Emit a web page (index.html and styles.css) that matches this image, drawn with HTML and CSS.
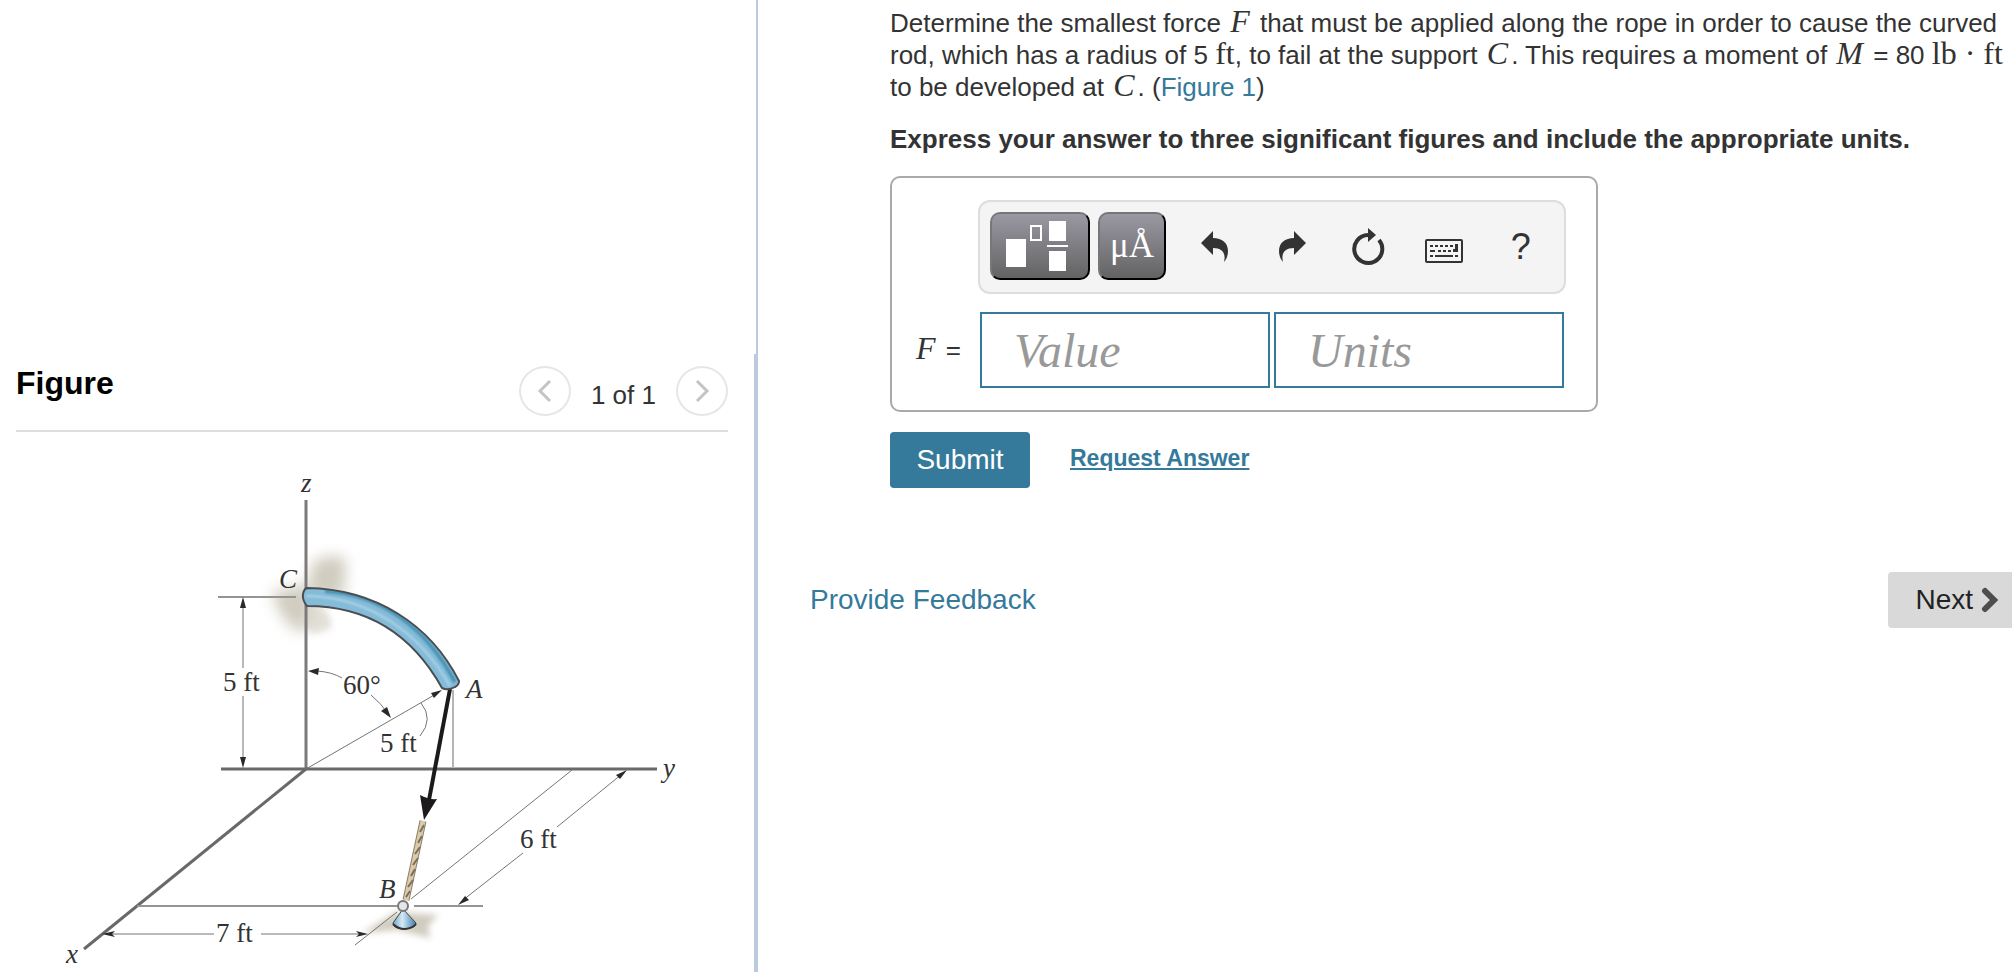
FILE: index.html
```html
<!DOCTYPE html>
<html lang="en">
<head>
<meta charset="UTF-8" />
<meta name="viewport" content="width=device-width, initial-scale=1.0">
<title>Smallest force along the rope</title>
<link rel="stylesheet" href="styles.css">
</head>
<body>

<div class="page">

  <aside class="left">
    <div class="spacer"></div>
    <section class="figure">
      <header class="figure-head">
        <h2>Figure</h2>
        <div class="pager">
          <button class="round" type="button" aria-label="Previous figure">
            <svg width="16" height="24" viewBox="0 0 16 24"><path d="M13 2 L3 12 L13 22"/></svg>
          </button>
          <span>1 of 1</span>
          <button class="round" type="button" aria-label="Next figure">
            <svg width="16" height="24" viewBox="0 0 16 24"><path d="M3 2 L13 12 L3 22"/></svg>
          </button>
        </div>
      </header>

      <svg class="diagram" viewBox="16 448 712 524" role="img" aria-label="Curved rod CA with rope AB">
        <defs>
          <filter id="soft" x="-60%" y="-60%" width="220%" height="220%"><feGaussianBlur stdDeviation="7"/></filter>
          <filter id="soft2" x="-50%" y="-50%" width="200%" height="200%"><feGaussianBlur stdDeviation="3"/></filter>
          <filter id="soft1" x="-20%" y="-20%" width="140%" height="140%"><feGaussianBlur stdDeviation="1"/></filter>
          <linearGradient id="cone" x1="0" x2="1" y1="0" y2="0">
            <stop offset="0" stop-color="#6fa6cb"/><stop offset=".4" stop-color="#d5ebf6"/><stop offset="1" stop-color="#3f7fae"/>
          </linearGradient>
          <clipPath id="rodclip"><path d="M307 588 C375 589 430 624 459 681 Q459 685 455 687 Q448 691 442 688 C413 636 370 606 307 606 Q302 600 303 594 Q304 589 307 588Z"/></clipPath>
        </defs>

        <!-- wall and ground shading -->
        <g class="shade">
          <path d="M306 598 L312 564 Q330 550 346 560 L344 596 Z" filter="url(#soft)"/>
          <path d="M310 584 L272 592 Q280 624 304 634 L312 606 Z" filter="url(#soft)"/>
          <path d="M306 606 L322 606 Q334 620 330 629 L314 634 L302 624 Z" filter="url(#soft2)" opacity=".6"/>
          <path d="M396 912 L362 933 L398 930 L430 938 L428 926 L438 915 Z" filter="url(#soft2)"/>
        </g>

        <!-- axes -->
        <g class="axis">
          <path d="M306 500 V769"/>
          <path d="M221 769 H657" class="dark"/>
          <path d="M306 769 L84 949" class="dark"/>
        </g>

        <!-- thin lines -->
        <g class="thin">
          <path d="M218 597 H296" class="mid"/>
          <path d="M137 906 H397 M414 906 H483" class="mid"/>
          <path d="M243 600 V668 M243 696 V764"/>
          <path d="M306 769 L436 694"/>
          <path d="M453 690 V768" class="pale"/>
          <path d="M317 671 Q332 672 342 678 M371 695 Q382 704 388 714"/>
          <path d="M421 703 Q434 719 420 736"/>
          <path d="M411 899 L572 770 M397 912 L355 945"/>
          <path d="M463 900 L523 853 M557 827 L622 774"/>
          <path d="M108 934 H214 M261 934 H362"/>
        </g>

        <!-- arrow heads -->
        <g class="head">
          <path d="M243 597 l-3 11 h6z"/>
          <path d="M243 768 l-3 -11 h6z"/>
          <path d="M308 671 l11 -3 l-1 7z"/>
          <path d="M391 718 l-10 -7 l6 -4z"/>
          <path d="M442 690 l-11 3 l3 5z"/>
          <path d="M458 905 l11 -5 l-4 -4z"/>
          <path d="M627 770 l-11 5 l4 4z"/>
          <path d="M102 934 l13 -3 l-3 3 l3 3z"/>
          <path d="M368 934 l-12 -3 l3 3 l-3 3z"/>
        </g>

        <!-- rope -->
        <path d="M423 821 L406 900" stroke="#8b7f6b" stroke-width="7"/>
        <path d="M423 821 L406 900" stroke="#dccbaa" stroke-width="5"/>
        <path d="M420 832 l4 -7 M418 843 l4 -7 M415 854 l5 -7 M413 865 l5 -7 M411 876 l4 -7 M408 887 l5 -7 M406 897 l4 -6" stroke="#7d705b" stroke-width="2"/>

        <!-- force -->
        <path d="M450 689 L429 800" stroke="#1c1a1b" stroke-width="4"/>
        <path d="M424 820 L420 795 Q429 800 437 799 Z" fill="#1c1a1b"/>

        <!-- rod -->
        <g clip-path="url(#rodclip)">
          <rect x="295" y="580" width="170" height="115" fill="#84bbd8"/>
          <path d="M325 591 C382 594 427 629 455 682" fill="none" stroke="#4a93b3" stroke-width="4" filter="url(#soft1)"/>
          <path d="M306 596 C370 597 420 633 450 686" fill="none" stroke="#b0d6e8" stroke-width="2" filter="url(#soft1)"/>
        </g>
        <path class="rod-edge" d="M307 588 C375 589 430 624 459 681 Q459 685 455 687 Q448 691 442 688 C413 636 370 606 307 606 Q302 600 303 594 Q304 589 307 588Z"/>

        <!-- support at B -->
        <path d="M403 909 L393 923 Q393 929 405 929 Q416 928 416 923 Z" fill="url(#cone)" stroke="#444" stroke-width="1"/>
        <path d="M393 924 Q398 929 405 929 Q413 928 416 924" fill="none" stroke="#333" stroke-width="2"/>
        <circle cx="403" cy="906" r="5" fill="#e6e6ea" stroke="#77777c" stroke-width="2"/>

        <g class="labels">
          <text x="301" y="492" class="it">z</text>
          <text x="279" y="588" class="it">C</text>
          <text x="466" y="698" class="it">A</text>
          <text x="379" y="898" class="it">B</text>
          <text x="663" y="777" class="it">y</text>
          <text x="66" y="963" class="it">x</text>
          <text x="223" y="691">5 ft</text>
          <text x="343" y="694">60°</text>
          <text x="380" y="752">5 ft</text>
          <text x="520" y="848">6 ft</text>
          <text x="216" y="942">7 ft</text>
        </g>
      </svg>
    </section>
  </aside>

  <main class="right">
    <div class="problem">
      <p class="question">Determine the smallest force <i class="math">F</i> that must be applied along the rope in order to cause the curved<br>
      rod, which has a radius of 5 <span class="math">ft</span>, to fail at the support <i class="math">C</i>. This requires a moment of <i class="math">M</i> = 80 <span class="math">lb · ft</span><br>
      to be developed at <i class="math">C</i>. (<a href="#">Figure 1</a>)</p>
      <p class="instruction">Express your answer to three significant figures and include the appropriate units.</p>

      <form class="answer">
        <div class="toolbar">
          <button class="tool wide" type="button" aria-label="Templates">
            <svg width="68" height="50" viewBox="0 0 68 50">
              <path d="M0 18h20v28H0z M43 0h17v20H43z M43 30h17v20H43z M41 24h21v2H41z" fill="#fff"/>
              <rect x="25" y="5" width="10" height="14" fill="none" stroke="#fff" stroke-width="2"/>
            </svg>
          </button>
          <button class="tool" type="button" aria-label="Symbols">μÅ</button>
          <div class="icons">
            <button type="button" aria-label="Undo">
              <svg width="28" height="32" viewBox="0 0 28 32"><path d="M0 12 L12 0 V7 C21 7 27 12 27 20 C27 25 25 29 23 31 C25 23 22 17 12 17 V24 Z"/></svg>
            </button>
            <button type="button" aria-label="Redo">
              <svg width="28" height="32" viewBox="0 0 28 32"><path d="M28 12 L16 0 V7 C7 7 1 12 1 20 C1 25 3 29 5 31 C3 23 6 17 16 17 V24 Z"/></svg>
            </button>
            <button type="button" aria-label="Reset">
              <svg width="34" height="38" viewBox="0 0 34 38"><path d="M17 7 A14 14 0 1 0 28 12" fill="none" stroke="#333" stroke-width="4"/><path d="M17 0 L25 7 L17 14Z"/></svg>
            </button>
            <button type="button" aria-label="Keyboard shortcuts">
              <svg class="keys" width="40" height="26" viewBox="0 0 40 26">
                <rect x="2" y="2" width="36" height="22" rx="1" fill="none" stroke="#333" stroke-width="2"/>
                <path d="M6 7h3v2H6z M11 7h3v2h-3z M16 7h3v2h-3z M21 7h3v2h-3z M26 7h3v2h-3z M31 6h3v8h-5v-3h2z M6 12h5v2H6z M14 12h3v2h-3z M19 12h3v2h-3z M24 12h3v2h-3z M6 17h3v2H6z M11 17h18v2H11z M31 17h3v2h-3z"/>
              </svg>
            </button>
            <button type="button" class="help" aria-label="Help">?</button>
          </div>
        </div>
        <label for="value"><i class="math">F</i> =</label>
        <div class="fields">
          <input id="value" type="text" placeholder="Value">
          <input id="units" type="text" placeholder="Units" aria-label="Units">
        </div>
      </form>

      <div class="actions">
        <button class="submit" type="button">Submit</button>
        <a href="#">Request Answer</a>
      </div>
    </div>

    <footer class="bottom">
      <a href="#">Provide Feedback</a>
      <button class="next" type="button">Next
        <svg width="18" height="26" viewBox="0 0 18 26"><path d="M4 4 L13 13 L4 22" fill="none" stroke="#4d4d4d" stroke-width="6" stroke-linecap="round"/></svg>
      </button>
    </footer>
  </main>

</div>

</body>
</html>
```

FILE: styles.css
```css
* { box-sizing:border-box; }
body { margin:0; font-family:"Liberation Sans", Arial, sans-serif; font-size:26px; line-height:32px; background:#fff; color:#333; }
h2, p { margin:0; }
a { color:#35799b; text-decoration:none; }
button { font-family:inherit; cursor:pointer; padding:0; }
svg { display:block; }

.page { display:grid; grid-template-columns:379fr 627fr; min-height:100vh; overflow:hidden; }

/* left side */
.left { display:flex; flex-direction:column; min-width:0; }
.spacer { height:354px; border-right:2px solid #bccadd; }
.figure { flex:1; border-right:4px solid #bccadd; padding:0 26px 0 16px; }
.figure-head { display:flex; justify-content:space-between; align-items:flex-start; height:78px; padding-top:12px; border-bottom:2px solid #ddd; margin-bottom:16px; }
.figure-head h2 { font-size:32px; line-height:34px; color:#000; }
.pager { display:flex; align-items:center; gap:20px; }
.pager span { padding-top:8px; }
.round { width:52px; height:50px; border:2px solid #e6e6e6; border-radius:50%; background:#fff; display:flex; align-items:center; justify-content:center; }
.round path { fill:none; stroke:#c4c4c4; stroke-width:3; }

.diagram { width:100%; height:auto; }
.axis path { stroke:#7c7a7b; stroke-width:3; }
.axis .dark { stroke:#6a6869; }
.thin path { fill:none; stroke:#757575; stroke-width:1; }
.thin .mid { stroke:#949494; stroke-width:2; }
.thin .pale { stroke:#b5b5b5; stroke-width:2; }
.head path { fill:#2a2829; }
.shade path { fill:#d0ccbf; }
.rod-edge { fill:none; stroke:#4a4e51; stroke-width:2; }
.labels text { font-family:"Liberation Serif", "Times New Roman", serif; font-size:27px; fill:#333; }
.labels .it { font-style:italic; }

/* right side */
.right { padding-left:52px; min-width:0; }
.problem { padding:7px 0 0 80px; }
.question { white-space:nowrap; }
.math { font-family:"Liberation Serif", "Times New Roman", serif; font-size:32px; line-height:0; }
i.math { margin:0 3px 0 2px; }
.instruction { margin-top:20px; font-weight:bold; }

.answer { display:inline-grid; grid-template-columns:86px 588px; row-gap:18px; margin-top:21px; padding:22px 30px 22px 0; border:2px solid #a9a9a9; border-radius:10px; vertical-align:top; }
.toolbar { grid-column:2; display:flex; gap:8px; height:94px; padding:10px; background:#f4f4f4; border:2px solid #ddd; border-radius:12px; }
.tool { width:68px; height:68px; border:2px outset #777; border-color:#777 #222 #222 #777; border-radius:10px; background:linear-gradient(#9a98a2, #636363); color:#fff; font-family:"Liberation Serif", serif; font-size:35px; display:flex; align-items:center; justify-content:center; }
.wide { width:100px; }
.icons { flex:1; display:flex; margin:0 -5px 0 3px; }
.icons button { flex:1; border:0; background:none; display:flex; align-items:center; justify-content:center; fill:#333; }
.icons .help { font-size:36px; color:#333; }
.keys { margin-top:8px; }
.answer label { align-self:center; text-align:right; padding-right:17px; }
.fields { display:flex; gap:4px; padding:0 2px; }
.fields input { flex:1; min-width:0; height:76px; padding:0 32px; border:2px solid #35799b; border-radius:0; background:#fff; font-family:"Liberation Serif", serif; font-size:48px; color:#333; }
.fields input::placeholder { color:#999; opacity:1; font-style:italic; }

.actions { display:flex; align-items:center; gap:40px; margin-top:20px; }
.actions a { font-size:23px; font-weight:bold; text-decoration:underline; padding-bottom:4px; }
.submit { width:140px; height:56px; border:0; border-radius:4px; background:#35799b; color:#fff; font-size:28px; }

.bottom { display:flex; justify-content:space-between; align-items:center; margin-top:84px; font-size:28px; }
.next { display:flex; align-items:center; gap:8px; height:56px; padding:0 13px 0 27px; border:0; border-radius:4px 0 0 4px; background:#d9d9d9; color:#222; font-size:28px; }
```
